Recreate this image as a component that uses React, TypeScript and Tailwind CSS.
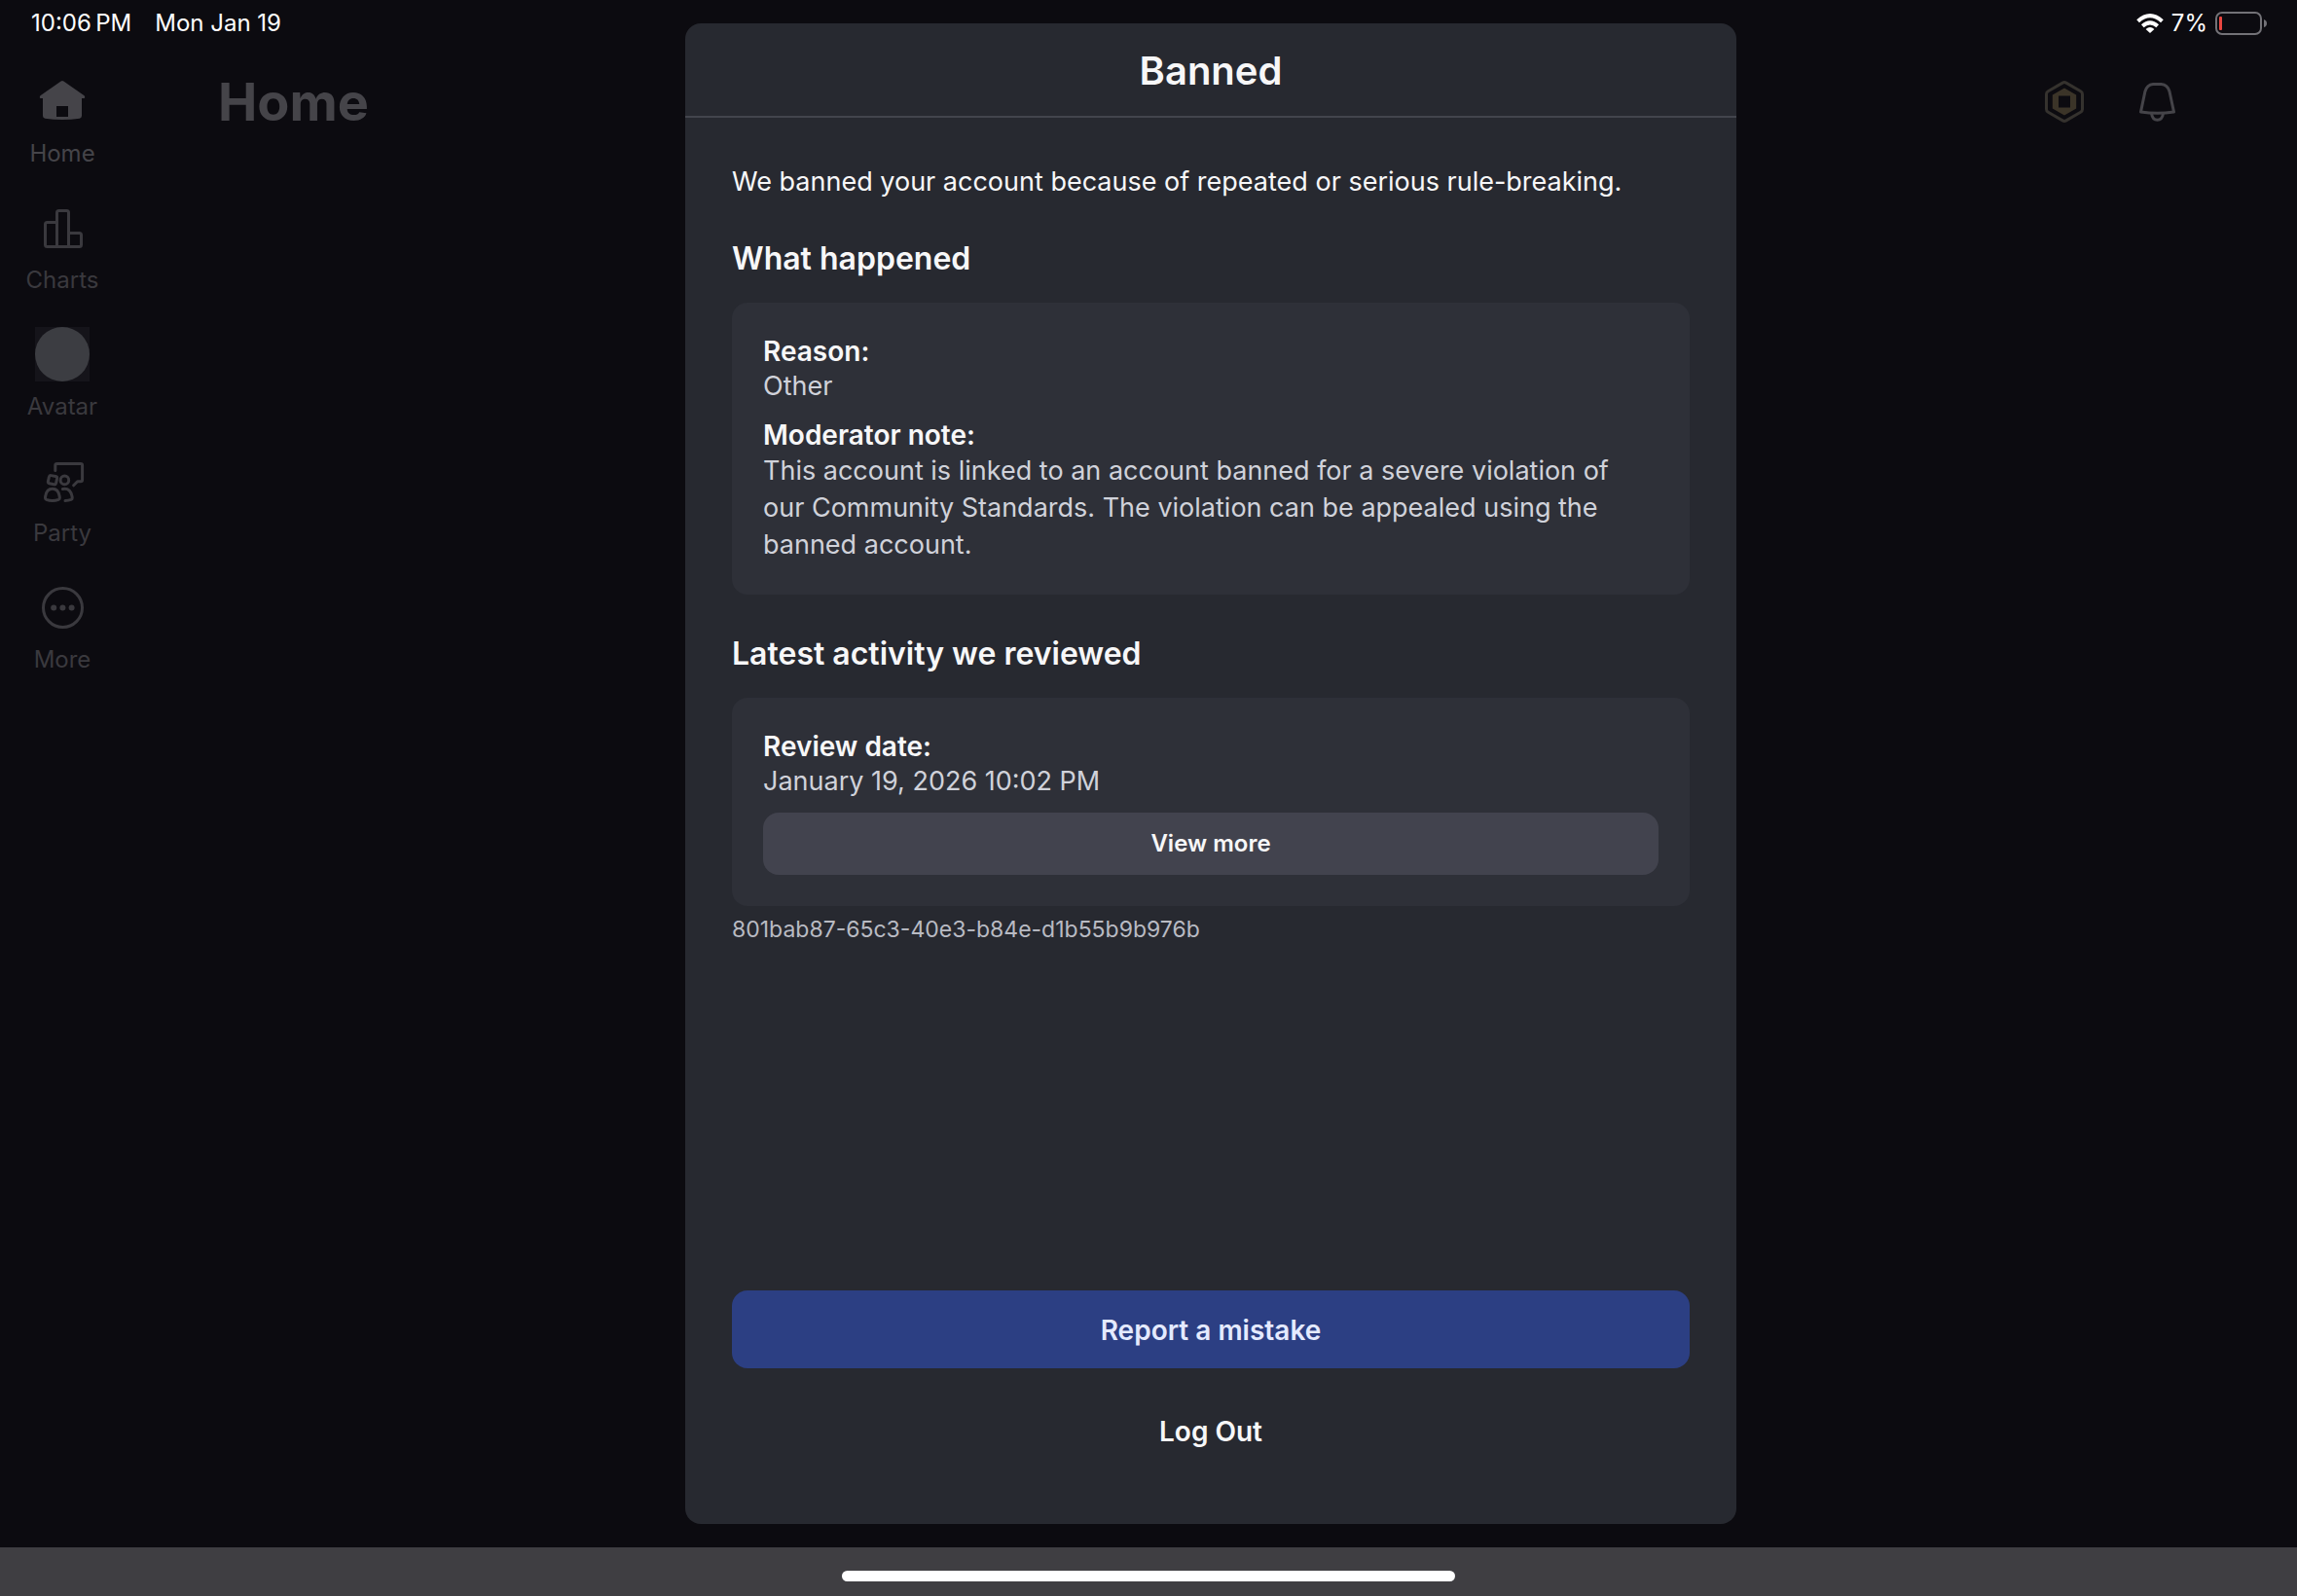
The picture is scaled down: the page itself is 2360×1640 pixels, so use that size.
import React from 'react';

interface NavItem {
  label: string;
  icon: React.ReactNode;
  active?: boolean;
}

const HomeIcon = () => (
  <svg viewBox="0 0 56 56" className="w-14 h-14" fill="currentColor" fillRule="evenodd">
    <path d="M26.6 7.6Q28 6.6 29.4 7.6L50.2 21.9Q51.4 22.8 51.2 24.2Q51 25 50.2 25H48V43Q48 45.2 45.8 45.8Q37 47 28 47Q19 47 10.2 45.8Q8 45.2 8 43V25H5.8Q5 25 4.8 24.2Q4.6 22.8 5.8 21.9ZM22 33V44H34V33Z" />
  </svg>
);

const ChartsIcon = () => (
  <svg viewBox="0 0 56 56" className="w-14 h-14" fill="none" stroke="currentColor" strokeWidth="3" strokeLinejoin="round">
    <path d="M22.5 22.5H12.5Q10.5 22.5 10.5 24.5V45.5Q10.5 47.5 12.5 47.5H45.5Q47.5 47.5 47.5 45.5V35.5Q47.5 33.5 45.5 33.5H34.5" />
    <path d="M22.5 47.5V12.5Q22.5 10.5 24.5 10.5H32.5Q34.5 10.5 34.5 12.5V47.5" />
  </svg>
);

const PartyIcon = () => (
  <svg viewBox="0 0 56 56" className="w-14 h-14" fill="none" stroke="currentColor" strokeWidth="3" strokeLinecap="round" strokeLinejoin="round">
    <path d="M20.8 17.6V12.2Q20.8 10.4 22.6 10.4H46.8Q48.6 10.4 48.6 12.2V27Q48.6 28.8 46.8 28.8H43.6L39.6 32.8" />
    <circle cx="30.4" cy="27.4" r="4.3" />
    <rect x="13.8" y="23" width="8.4" height="8.4" rx="1.8" transform="rotate(12 18 27.2)" />
    <path d="M10.5 45.4C11 40 13.2 36.3 17.9 36.3C22.6 36.3 24.8 40 25.3 45.4Q25.4 46.8 24.2 47.3C20.6 48.7 15.2 48.7 11.6 47.3Q10.4 46.8 10.5 45.4Z" />
    <path d="M28.4 36.4C34.6 35.4 37.4 39 38.2 45.2Q38.4 46.8 37 47.4Q34.4 48.4 31 48.4" />
  </svg>
);

const MoreIcon = () => (
  <svg viewBox="0 0 56 56" className="w-14 h-14" fill="none" stroke="currentColor" strokeWidth="3">
    <circle cx="28.5" cy="28.5" r="20" />
    <g fill="currentColor" stroke="none">
      <circle cx="19.2" cy="28.6" r="3" />
      <circle cx="28.4" cy="28.6" r="3" />
      <circle cx="37.6" cy="28.6" r="3" />
    </g>
  </svg>
);

const AvatarIcon = () => (
  <span className="block w-14 h-14 bg-[#15141a]">
    <span className="block w-14 h-14 rounded-full bg-[#3c3d42]"></span>
  </span>
);

const RobuxIcon = () => (
  <svg viewBox="0 0 48 48" className="w-12 h-12" fill="none">
    <path d="M23.2 5.1Q25 4.1 26.8 5.1L41.7 13.7Q43.5 14.7 43.5 16.7V32.3Q43.5 34.3 41.7 35.3L26.8 43.9Q25 44.9 23.2 43.9L8.3 35.3Q6.5 34.3 6.5 32.3V16.7Q6.5 14.7 8.3 13.7Z" stroke="#35322e" strokeWidth="3" />
    <path d="M25 10.6L37.2 17.6V31.6L25 38.6L12.8 31.6V17.6ZM19 18.6V30.6H31V18.6Z" fill="#3b3428" fillRule="evenodd" />
  </svg>
);

const BellIcon = () => (
  <svg viewBox="0 0 48 48" className="w-12 h-12" fill="none" stroke="currentColor" strokeWidth="3" strokeLinejoin="round">
    <path d="M20 6.5H28.5Q35 7 37 14L41.5 35Q24.5 37.4 7.5 35L11.9 14Q14 7 20 6.5Z" />
    <path d="M18.5 36.5Q19.5 43.3 24.5 43.3Q29.5 43.3 30.5 36.5" />
  </svg>
);

const WifiIcon = () => (
  <svg viewBox="0 0 28 20" className="w-7 h-5" fill="none" stroke="currentColor" strokeWidth="4">
    <path d="M1.6 7.8Q14 -3.6 26.4 7.8" />
    <path d="M6.3 12.8Q14 6 21.7 12.8" />
    <path d="M14 20L9.6 15.9Q14 12.2 18.4 15.9Z" fill="currentColor" stroke="none" />
  </svg>
);

const BatteryIcon = () => (
  <svg viewBox="0 0 54 24" className="w-[54px] h-6">
    <rect x="1" y="1" width="46" height="22" rx="6" fill="none" stroke="#737277" strokeWidth="2" />
    <rect x="4" y="5" width="3" height="14" rx="1" fill="#ea4640" />
    <path d="M50 8Q53 9 53 12Q53 15 50 16Z" fill="#737277" />
  </svg>
);

const NAV_ITEMS: NavItem[] = [
  { label: 'Home', icon: <HomeIcon />, active: true },
  { label: 'Charts', icon: <ChartsIcon /> },
  { label: 'Avatar', icon: <AvatarIcon /> },
  { label: 'Party', icon: <PartyIcon /> },
  { label: 'More', icon: <MoreIcon /> },
];

const StatusBar = () => (
  <div className="h-12 pl-8 pr-[30px] flex items-center justify-between text-2xl text-white">
    <div className="flex items-center gap-6">
      <span>10:06&#8201;PM</span>
      <span>Mon Jan 19</span>
    </div>
    <div className="flex items-center">
      <WifiIcon />
      <span className="mx-2">7%</span>
      <BatteryIcon />
    </div>
  </div>
);

const Sidebar = () => (
  <nav className="w-32 shrink-0 pt-7 flex flex-col gap-8">
    {NAV_ITEMS.map((item) => (
      <a
        key={item.label}
        href="#"
        className={`flex flex-col items-center gap-2.5 ${item.active ? 'text-[#454449]' : 'text-[#3a393e]'}`}
      >
        {item.icon}
        <span className="text-2xl leading-8">{item.label}</span>
      </a>
    ))}
  </nav>
);

const Field = ({ label, children }: { label: string; children: React.ReactNode }) => (
  <div>
    <h3 className="text-[28px] leading-9 font-semibold text-[#f7f7f8]">{label}</h3>
    {children}
  </div>
);

const Section = ({ title, children }: { title: string; children: React.ReactNode }) => (
  <section className="mt-10">
    <h2 className="mb-6 text-[32px] leading-[42px] font-semibold text-[#f7f7f8]">{title}</h2>
    <div className="p-8 flex flex-col gap-3.5 rounded-2xl bg-[#2e3038]">{children}</div>
  </section>
);

const BannedDialog = () => (
  <div role="dialog" aria-labelledby="dialog-title" className="w-full max-w-[1080px] flex flex-col rounded-2xl bg-[#272930] overflow-hidden">
    <header className="h-[97px] pt-0.5 shrink-0 flex items-center justify-center border-b-2 border-[#43454d]">
      <h1 id="dialog-title" className="text-[40px] font-semibold text-[#f7f7f8]">Banned</h1>
    </header>

    <div className="flex-1 px-12 pt-12 pb-14 flex flex-col">
      <p className="text-[27px] leading-9 text-[#f7f7f8]">
        We banned your account because of repeated or serious rule-breaking.
      </p>

      <Section title="What happened">
        <Field label="Reason:">
          <p className="text-[27px] leading-9 text-[#d0d2da]">Other</p>
        </Field>
        <Field label="Moderator note:">
          <p className="pr-8 text-[27px] leading-[38px] text-[#d0d2da]">
            This account is linked to an account banned for a severe violation of our Community Standards. The violation can be appealed using the banned account.
          </p>
        </Field>
      </Section>

      <Section title="Latest activity we reviewed">
        <Field label="Review date:">
          <p className="text-[27px] leading-9 text-[#d0d2da]">January 19, 2026 10:02 PM</p>
        </Field>
        <button className="h-16 rounded-2xl bg-[#42434e] text-2xl font-semibold text-[#f7f7f8]">View more</button>
      </Section>
      <p className="mt-2 text-[23px] leading-8 text-[#b9bbc3]">801bab87-65c3-40e3-b84e-d1b55b9b976b</p>

      <div className="mt-auto pt-12 flex flex-col gap-6">
        <button className="h-20 pt-0.5 rounded-2xl bg-[#2c3f83] text-[28px] font-semibold text-[#e4eaff]">Report a mistake</button>
        <button className="h-20 pt-0.5 rounded-2xl text-[28px] font-semibold text-[#f7f7f8]">Log Out</button>
      </div>
    </div>
  </div>
);

export default function App() {
  return (
    <div className="min-h-screen flex flex-col bg-[#0c0b10] font-['Inter','Liberation_Sans',sans-serif]">
      <div className="flex-1 grid">
        <div className="col-start-1 row-start-1">
          <StatusBar />
          <div className="flex">
            <Sidebar />
            <main className="flex-1">
              <header className="h-28 pl-24 pr-30 flex items-center justify-between text-[#454449]">
                <h1 className="text-[54px] font-bold">Home</h1>
                <div className="flex gap-12">
                  <button aria-label="Robux">
                    <RobuxIcon />
                  </button>
                  <button aria-label="Notifications">
                    <BellIcon />
                  </button>
                </div>
              </header>
            </main>
          </div>
        </div>

        {/* Dialog sits over the page, centered beside the sidebar */}
        <div className="col-start-1 row-start-1 pl-32 py-6 flex justify-center">
          <BannedDialog />
        </div>
      </div>

      <footer className="h-[50px] pt-6 flex justify-center items-start bg-[#3f3e42]">
        <div className="w-[630px] h-[11px] rounded-full bg-white"></div>
      </footer>
    </div>
  );
}
